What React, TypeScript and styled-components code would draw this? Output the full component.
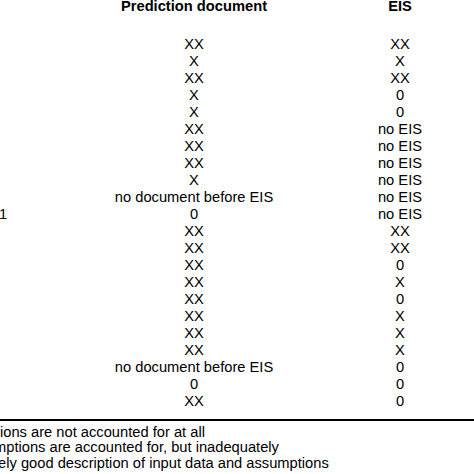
import React from 'react'
import styled, { createGlobalStyle } from 'styled-components'

const GlobalStyle = createGlobalStyle`
  html, body {
    margin: 0;
    padding: 0;
    background: #fff;
  }
  body {
    font-family: "Liberation Sans", Arial, Helvetica, sans-serif;
    font-size: 14.7px;
    color: #000;
  }
`;

const Page = styled.div`
  width: 474px;
  height: 474px;
  overflow: hidden;
  background: #fff;
`;

const Row = styled.div<{ $head?: boolean }>`
  display: grid;
  grid-template-columns: 62px 212px 1fr;
  column-gap: 26px;
  line-height: ${(p) => (p.$head ? '12px' : '17px')};
  font-weight: ${(p) => (p.$head ? 700 : 400)};
  margin-bottom: ${(p) => (p.$head ? '24px' : '0')};
  white-space: nowrap;
`;

const Cell = styled.div`
  text-align: center;
`;

const RowLabel = styled.div`
  text-indent: -1px;
`;

const Rule = styled.div`
  margin-top: 9px;
  border-top: 2px solid #000;
`;

const Legend = styled.div`
  margin-top: 3.5px;
  line-height: 15.5px;
  white-space: nowrap;
`;

const LegendLine = styled.div<{ $shift: number }>`
  margin-left: ${(p) => p.$shift}px;
`;

type Entry = { label?: string; doc: string; eis: string }

const rows: Entry[] = [
  { doc: 'XX', eis: 'XX' },
  { doc: 'X', eis: 'X' },
  { doc: 'XX', eis: 'XX' },
  { doc: 'X', eis: '0' },
  { doc: 'X', eis: '0' },
  { doc: 'XX', eis: 'no EIS' },
  { doc: 'XX', eis: 'no EIS' },
  { doc: 'XX', eis: 'no EIS' },
  { doc: 'X', eis: 'no EIS' },
  { doc: 'no document before EIS', eis: 'no EIS' },
  { label: '1', doc: '0', eis: 'no EIS' },
  { doc: 'XX', eis: 'XX' },
  { doc: 'XX', eis: 'XX' },
  { doc: 'XX', eis: '0' },
  { doc: 'XX', eis: 'X' },
  { doc: 'XX', eis: '0' },
  { doc: 'XX', eis: 'X' },
  { doc: 'XX', eis: 'X' },
  { doc: 'XX', eis: 'X' },
  { doc: 'no document before EIS', eis: '0' },
  { doc: '0', eis: '0' },
  { doc: 'XX', eis: '0' },
]

const legend = [
  { text: 'ions are not accounted for at all', shift: 0 },
  { text: 'mptions are accounted for, but inadequately', shift: -6 },
  { text: 'tely good description of input data and assumptions', shift: -6 },
]

const App = () => {
  return (
    <Page>
      <GlobalStyle />
      <Row $head>
        <div />
        <Cell>Prediction document</Cell>
        <Cell>EIS</Cell>
      </Row>
      {rows.map((r, i) => (
        <Row key={i}>
          <RowLabel>{r.label}</RowLabel>
          <Cell>{r.doc}</Cell>
          <Cell>{r.eis}</Cell>
        </Row>
      ))}
      <Rule />
      <Legend>
        {legend.map((l, i) => (
          <LegendLine key={i} $shift={l.shift}>{l.text}</LegendLine>
        ))}
      </Legend>
    </Page>
  )
}

export default App
